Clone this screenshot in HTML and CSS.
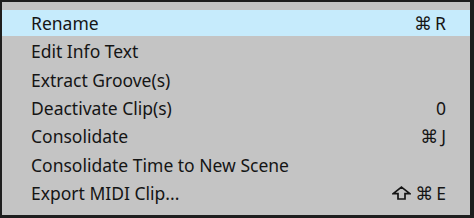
FILE: index.html
```html
<!DOCTYPE html>
<html>
<head>
<meta charset="utf-8">
<link rel="stylesheet" href="styles.css">
</head>
<body>
<div class="menu">
  <div class="item active"><span class="label">Rename</span><span class="key"><span class="sym">⌘</span>R</span></div>
  <div class="item"><span class="label">Edit Info Text</span></div>
  <div class="item"><span class="label">Extract Groove(s)</span></div>
  <div class="item"><span class="label">Deactivate Clip(s)</span><span class="key">0</span></div>
  <div class="item"><span class="label">Consolidate</span><span class="key"><span class="sym">⌘</span>J</span></div>
  <div class="item"><span class="label">Consolidate Time to New Scene</span></div>
  <div class="item"><span class="label">Export MIDI Clip...</span><span class="key"><svg class="shift" width="19" height="14" viewBox="0 0 19 14"><path d="M9.5 1.1 L17.8 7.6 L13 7.6 L13 13 L6 13 L6 7.6 L1.2 7.6 Z" fill="none" stroke="#151515" stroke-width="1.7" stroke-linejoin="miter"/></svg><span class="sym">⌘</span>E</span></div>
</div>
</body>
</html>
```
FILE: styles.css
```css
html, body {
  margin: 0;
  padding: 0;
  background: #1e1e1e;
}
body {
  width: 474px;
  height: 218px;
  padding: 2px 4px 3px 2px;
  box-sizing: border-box;
}
.menu {
  background: #c4c4c4;
  height: 213px;
  padding: 7px 0 0 0;
  box-sizing: border-box;
  font-family: "Noto Sans", "DejaVu Sans", sans-serif;
  font-size: 17.5px;
  color: #151515;
}
.item {
  display: flex;
  justify-content: space-between;
  align-items: center;
  height: 28.33px;
  padding: 0 24px 0 29px;
  border-top: 1.5px solid transparent;
  border-bottom: 1.5px solid transparent;
  box-sizing: border-box;
  background-clip: padding-box;
}
.item.active {
  background-color: #c6ebfc;
}
.key {
  display: flex;
  align-items: center;
  gap: 3px;
}
.sym {
  font-family: "DejaVu Sans", sans-serif;
  font-size: 18px;
}
.shift {
  margin-right: 1px;
}
```
